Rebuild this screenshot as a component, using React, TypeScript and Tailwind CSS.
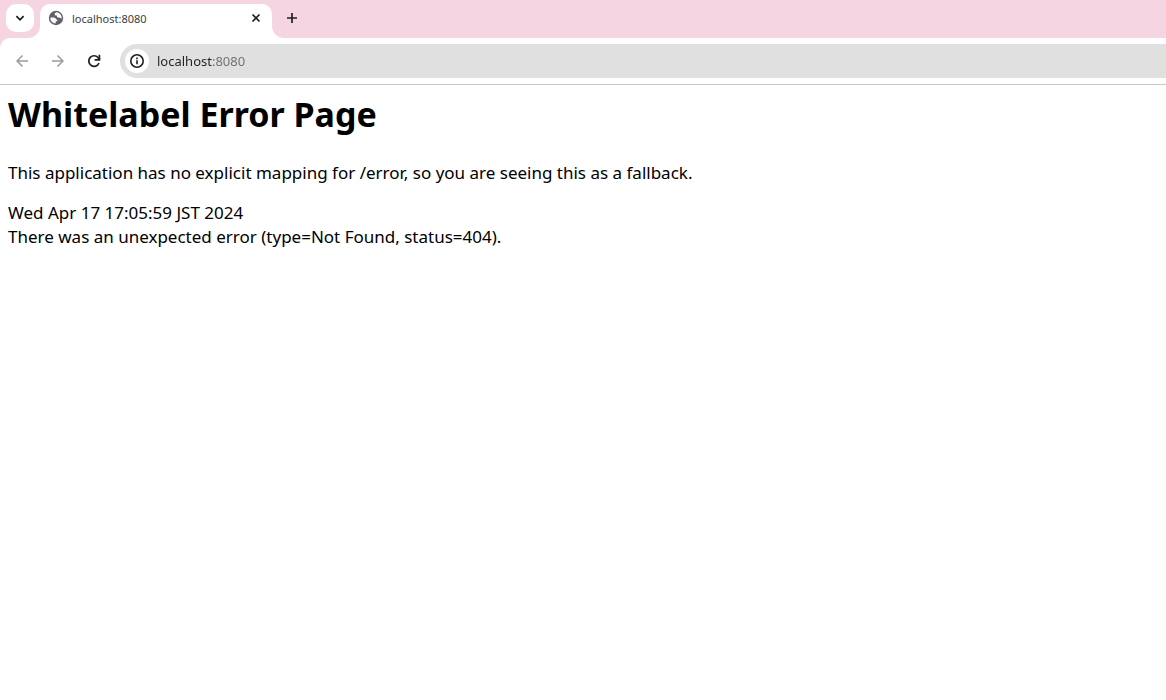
import React, { useState } from "react";

type IconProps = { path: string; className: string };

function Icon({ path, className }: IconProps) {
  return (
    <svg viewBox="0 0 24 24" fill="currentColor" aria-hidden="true" className={className}>
      <path d={path} />
    </svg>
  );
}

const BACK = "M20 11H7.830l5.590-5.590L12 4l-8 8 8 8 1.410-1.410L7.830 13H20v-2z";
const FORWARD = "M12 4l-1.410 1.410L16.170 11H4v2h12.170l-5.580 5.590L12 20l8-8z";

function Reload() {
  return (
    <svg viewBox="0 0 16 16" fill="none" stroke="currentColor" strokeWidth="1.7" aria-hidden="true" className="size-4">
      <path d="M13 10a5.300 5.300 0 1 1-.600-5L14 6.600" />
      <path d="M13.400 1.800v5H8.600" />
    </svg>
  );
}

function Globe() {
  return (
    <svg viewBox="0 0 16 16" aria-hidden="true" className="size-4 shrink-0">
      <circle cx="8" cy="8" r="7.200" fill="#5f6368" />
      <path
        d="M8.600 2.300c-1.200.400-1.900 1-1.900 1.900 0 .8.700 1.200 1.600 1.300.8.100.8.500.7 1.100 0 .6.400.9 1.100.9h1.200c.7 0 .9.400 1.300.8l1.100.200A5.700 5.700 0 0 0 8.600 2.300zM2.300 7.700c1.700-.2 3.600-.200 4.700.3.900.4.900 1.200 1.500 1.400.9.200 1.100.7.8 1.300-.3.600-1.300.6-1.600 1-.3.400 0 1.200-.1 1.900A5.700 5.700 0 0 1 2.300 7.700z"
        fill="#fff"
      />
    </svg>
  );
}

export default function App() {
  const [address, setAddress] = useState("localhost:8080");
  return (
    <div className="min-h-screen bg-white font-['Noto_Sans','Noto_Sans_CJK_JP',sans-serif] text-black">
      <header className="bg-[#f6d5e3]">
        <div className="flex h-[38px] items-start pt-1 pl-1.5">
          <button
            type="button"
            aria-label="Search tabs"
            className="mr-1.5 flex size-7 items-center justify-center rounded-[10px] bg-white text-[#1f1f1f]"
          >
            <svg viewBox="0 0 10 10" fill="none" stroke="currentColor" strokeWidth="1.800" className="size-2.5">
              <path d="M1.400 3.200L5 6.800l3.600-3.600" />
            </svg>
          </button>
          <div className="relative flex h-[34px] w-[232px] items-center rounded-t-[10px] bg-white pr-2.5 pb-1.5 pl-2">
            <svg viewBox="0 0 12 12" aria-hidden="true" className="absolute right-full bottom-0 size-3">
              <path d="M12 0v12H0A12 12 0 0 0 12 0z" fill="#fff" />
            </svg>
            <svg viewBox="0 0 12 12" aria-hidden="true" className="absolute bottom-0 left-full size-3">
              <path d="M0 0v12h12A12 12 0 0 1 0 0z" fill="#fff" />
            </svg>
            <Globe />
            <span className="ml-2 flex-1 pt-0.5 text-[11px] leading-4 text-[#3c4043]">localhost:8080</span>
            <button type="button" aria-label="Close tab" className="flex size-3 items-center justify-center text-[#1f1f1f]">
              <svg viewBox="0 0 12 12" fill="none" stroke="currentColor" strokeWidth="1.700" className="size-3">
                <path d="M2.500 2.500l7 7M9.500 2.500l-7 7" />
              </svg>
            </button>
          </div>
          <button
            type="button"
            aria-label="New tab"
            className="ml-1.5 flex size-7 items-center justify-center text-[#1f1f1f]"
          >
            <svg viewBox="0 0 12 12" fill="none" stroke="currentColor" strokeWidth="1.700" className="size-3">
              <path d="M6 1v10M1 6h10" />
            </svg>
          </button>
        </div>
        <nav
          aria-label="Browser toolbar"
          className="flex h-[47px] items-center rounded-tl-[10px] border-b border-[#c8c8c8] bg-white pl-3"
        >
          <div className="flex gap-4">
            <button type="button" aria-label="Back" className="flex size-5 items-center justify-center text-[#9b9b9b]">
              <Icon path={BACK} className="size-[18px]" />
            </button>
            <button type="button" aria-label="Forward" className="flex size-5 items-center justify-center text-[#9b9b9b]">
              <Icon path={FORWARD} className="size-[18px]" />
            </button>
            <button type="button" aria-label="Reload" className="flex size-5 items-center justify-center text-[#1f1f1f]">
              <Reload />
            </button>
          </div>
          <div className="ml-4 flex h-[34px] flex-1 items-center rounded-l-full bg-[#e0e0e0] pl-[5px]">
            <button
              type="button"
              aria-label="View site information"
              className="flex size-6 items-center justify-center rounded-full bg-white text-[#1f1f1f]"
            >
              <svg viewBox="0 0 16 16" fill="none" stroke="currentColor" strokeWidth="1.600" className="size-4">
                <circle cx="8" cy="8" r="6.200" />
                <path d="M8 7.200v4M8 4.600v1.600" />
              </svg>
            </button>
            <input
              aria-label="Address"
              value={address}
              onChange={(event) => setAddress(event.target.value)}
              className="ml-2 min-w-0 flex-1 bg-[linear-gradient(90deg,#202124_55px,#6b6e72_55px)] bg-clip-text pt-px text-[13px] text-transparent caret-black outline-none"
            />
          </div>
        </nav>
      </header>
      <main className="px-2 pt-2">
        <h1 className="text-[34px] leading-[42px] font-bold">Whitelabel Error Page</h1>
        <div className="mt-[26px] text-[17px] leading-6">
          <p>This application has no explicit mapping for /error, so you are seeing this as a fallback.</p>
          <div className="mt-4">Wed Apr 17 17:05:59 JST 2024</div>
          <div>There was an unexpected error (type=Not Found, status=404).</div>
        </div>
      </main>
    </div>
  );
}
